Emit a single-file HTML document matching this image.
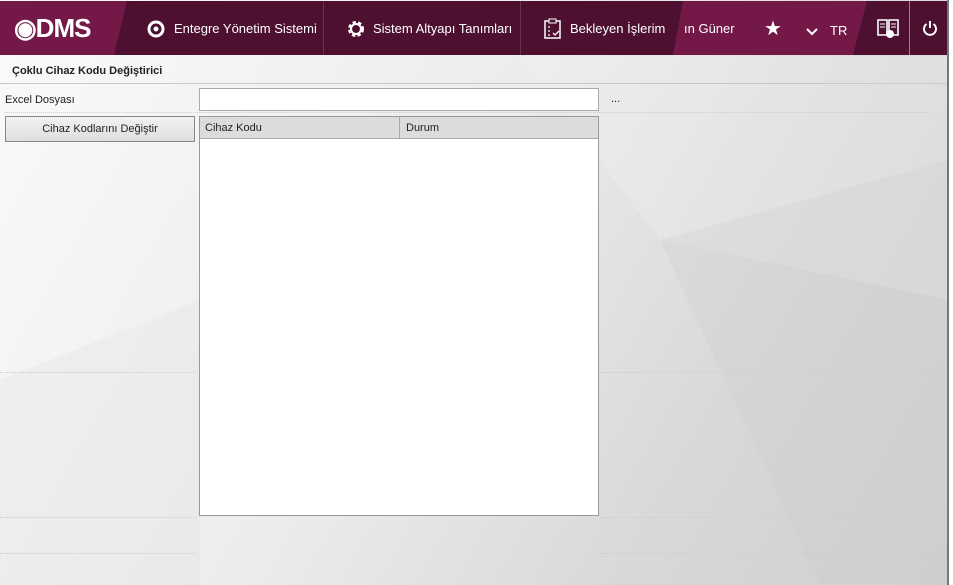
<!DOCTYPE html>
<html><head><meta charset="utf-8"><style>
*{box-sizing:border-box;margin:0;padding:0}
body{width:953px;height:585px;overflow:hidden;background:#fff;font-family:"Liberation Sans",sans-serif;font-size:12px;color:#222;position:relative}
.win{position:absolute;left:0;top:0;width:949px;height:585px;border-right:2px solid #777;overflow:hidden;background:linear-gradient(120deg,#fafafa 0%,#ececec 45%,#d8d8d8 75%,#cfcfcf 100%)}
.hdr{position:absolute;left:0;top:1px;width:949px;height:54px;background:#4d1030;color:#fff;font-size:13px}
.t{position:absolute;top:20px;white-space:nowrap}
.sep{position:absolute;top:0;width:1px;height:54px;background:#6a3050}
.lbl{position:absolute;font-size:11px}
.dot{position:absolute;height:0;border-top:1px dotted #ccc}
</style></head><body>
<div class="win">
<svg style="position:absolute;left:0;top:0" width="949" height="585">
<polygon points="520,56 949,56 949,300 660,240" fill="#f2f2f2" opacity=".3"/>
<polygon points="660,240 949,160 949,585 820,585" fill="#cccccc" opacity=".3"/>
<polygon points="0,380 200,300 200,585 0,585" fill="#e0e0e0" opacity=".3"/>
</svg>
<div class="hdr">
<svg style="position:absolute;left:0;top:0" width="949" height="54">
<polygon points="0,0 127,0 114,54 0,54" fill="#741848"/>
<polygon points="683,0 867,0 853,54 673,54" fill="#741848"/>
</svg>
<div class="t" style="left:14px;top:12px;font-size:26px;font-weight:bold;letter-spacing:-1px">&#9673;DMS</div>
<svg style="position:absolute;left:147px;top:19px" width="18" height="18"><circle cx="9" cy="9" r="7" fill="none" stroke="#fff" stroke-width="3"/><circle cx="9" cy="9" r="2.5" fill="#fff"/></svg>
<div class="t" style="left:174px">Entegre Yönetim Sistemi</div>
<div class="sep" style="left:323px"></div>
<svg style="position:absolute;left:346px;top:18px" width="20" height="20"><circle cx="10" cy="10" r="6" fill="none" stroke="#fff" stroke-width="4" stroke-dasharray="3 2"/><circle cx="10" cy="10" r="5" fill="none" stroke="#fff" stroke-width="2"/></svg>
<div class="t" style="left:373px">Sistem Altyapı Tanımları</div>
<div class="sep" style="left:520px"></div>
<svg style="position:absolute;left:543px;top:17px" width="20" height="22"><rect x="2" y="3" width="15" height="17" fill="none" stroke="#fff" stroke-width="1.5"/><rect x="6" y="1" width="7" height="4" fill="#4d1030" stroke="#fff"/><path d="M5 9h2M5 13h2M5 17h2M10 15l2 2 4-4" stroke="#fff" fill="none" stroke-width="1.3"/></svg>
<div class="t" style="left:570px">Bekleyen İşlerim</div>
<div class="t" style="left:684px">ın Güner</div>
<div class="t" style="left:764px;top:15px;font-size:20px">★</div>
<svg style="position:absolute;left:806px;top:27px" width="12" height="8"><path d="M1 1l5 5 5-5" stroke="#fff" stroke-width="2" fill="none"/></svg>
<div class="t" style="left:830px;top:22px">TR</div>
<svg style="position:absolute;left:876px;top:16px" width="24" height="22"><path d="M2 3h9v15H2zM13 3h9v15h-9z" fill="none" stroke="#fff" stroke-width="1.6"/><path d="M4 7h5M4 10h5M15 7h5M15 10h5" stroke="#fff"/><circle cx="14" cy="17" r="4" fill="#fff"/></svg>
<div class="sep" style="left:909px;background:#888"></div>
<svg style="position:absolute;left:922px;top:19px" width="16" height="16"><path d="M4.5 4a6 6 0 1 0 7 0" stroke="#fff" stroke-width="2" fill="none"/><path d="M8 1v7" stroke="#fff" stroke-width="2"/></svg>
</div>
<div class="lbl" style="left:12px;top:65px;font-weight:bold">Çoklu Cihaz Kodu Değiştirici</div>
<div style="position:absolute;left:0;top:83px;width:949px;border-top:1px solid #c8c8c8"></div>
<div class="lbl" style="left:5px;top:94px">Excel Dosyası</div>
<div style="position:absolute;left:199px;top:88px;width:400px;height:23px;background:#fff;border:1px solid #aaa"></div>
<div class="lbl" style="left:611px;top:93px">...</div>
<div class="dot" style="left:5px;top:112px;width:925px"></div>
<div style="position:absolute;left:5px;top:116px;width:190px;height:26px;border:1px solid #888;background:linear-gradient(#f2f2f2,#dedede);font-size:11px;text-align:center;line-height:24px">Cihaz Kodlarını Değiştir</div>
<div style="position:absolute;left:199px;top:116px;width:400px;height:400px;background:#fff;border:1px solid #999">
<div style="height:22px;background:#dcdcdc;border-bottom:1px solid #aaa;position:relative;font-size:11px">
<span style="position:absolute;left:5px;top:5px">Cihaz Kodu</span>
<span style="position:absolute;left:199px;top:0;height:21px;border-left:1px solid #aaa"></span>
<span style="position:absolute;left:206px;top:5px">Durum</span>
</div></div>
<div class="dot" style="left:0;top:372px;width:196px"></div>
<div class="dot" style="left:600px;top:372px;width:330px"></div>
<div class="dot" style="left:0;top:517px;width:196px"></div>
<div class="dot" style="left:600px;top:517px;width:330px"></div>
<div class="dot" style="left:0;top:553px;width:196px"></div>
<div class="dot" style="left:600px;top:553px;width:330px"></div>
</div>
</body></html>
